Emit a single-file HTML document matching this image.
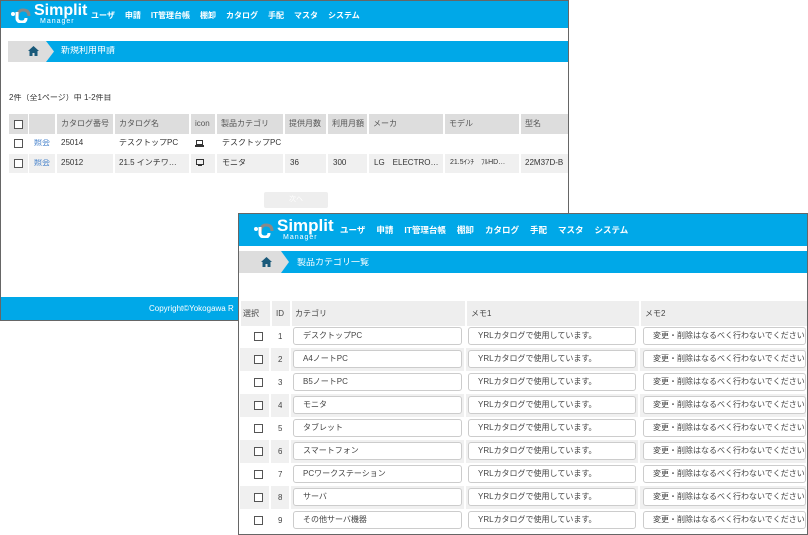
<!DOCTYPE html>
<html><head><meta charset="utf-8"><style>
*{margin:0;padding:0;box-sizing:border-box}
body{width:808px;height:535px;background:#fff;position:relative;overflow:hidden;font-family:"Liberation Sans","Noto Sans CJK JP",sans-serif;color:#333}
.a{position:absolute}
.win{position:absolute;background:#fff;border:1px solid #666;overflow:hidden}
.hdr{position:absolute;left:0;right:0;background:#00a8e8;color:#fff}
.logo{position:absolute;font-weight:bold;color:#fff}
.nav{position:absolute;font-size:8px;font-weight:bold;color:#fff;white-space:nowrap;word-spacing:0}
.nav span{margin-right:10px}
.bc{position:absolute;left:7px;right:0;background:#00a8e8}
.bch{position:absolute;left:0;top:0;bottom:0;background:#ddd}
.cb{position:absolute;width:9px;height:9px;border:1px solid #555;background:#fff}
.cell{position:absolute;font-size:8px;line-height:1;white-space:nowrap;overflow:hidden}
.th{background:#ddd}
.inp{position:absolute;height:18px;border:1px solid #ccc;border-radius:3px;background:#fff;font-size:8px;color:#444;padding-left:9px;line-height:16px;white-space:nowrap;overflow:hidden}
</style></head><body>

<!-- back window -->
<div class="win" style="left:0;top:0;width:569px;height:321px">
  <div class="hdr" style="top:0;height:27px"></div>
  <svg class="a" style="left:9px;top:6px" width="22" height="16" viewBox="0 0 22 16"><circle cx="3" cy="7" r="2" fill="#fff"/><path d="M7 13 Q7 3 13 3 Q19 3 19 9" stroke="#888" stroke-width="3" fill="none"/><path d="M7 5 V11 Q7 15 12 15 Q16 15 16 11" stroke="#fff" stroke-width="3" fill="none"/></svg>
  <div class="logo" style="left:33px;top:1px;font-size:16px">Simplit</div>
  <div class="logo" style="left:39px;top:17px;font-size:7px;letter-spacing:1px;font-weight:normal">Manager</div>
  <div class="nav" style="left:90px;top:9px"><span>ユーザ</span><span>申請</span><span>IT管理台帳</span><span>棚卸</span><span>カタログ</span><span>手配</span><span>マスタ</span><span>システム</span></div>
  <div class="bc" style="top:40px;height:21px"></div>
  <div class="bch" style="left:7px;top:40px;height:21px;width:38px"></div>
  <svg class="a" style="left:45px;top:40px" width="8" height="21"><polygon points="0,0 8,10.5 0,21" fill="#ddd"/></svg>
  <svg class="a" style="left:27px;top:45px" width="11" height="10" viewBox="0 0 11 10"><path d="M5.5 0 L11 5 H9.5 V10 H6.5 V7 H4.5 V10 H1.5 V5 H0 Z" fill="#1a5a7a"/></svg>
  <div class="cell" style="left:60px;top:45px;color:#fff;font-size:9px">新規利用申請</div>
  <div class="cell" style="left:8px;top:93px;color:#333">2件（全1ページ）中 1-2件目</div>
  <div class="cell th" style="left:8px;top:113px;width:19px;height:20px"></div>
  <div class="cb" style="left:13px;top:119px"></div>
  <div class="cell th" style="left:28px;top:113px;width:26px;height:20px"></div>
  <div class="cell th" style="left:56px;top:113px;width:56px;height:20px;padding:6px 4px;color:#555">カタログ番号</div>
  <div class="cell th" style="left:114px;top:113px;width:74px;height:20px;padding:6px 4px;color:#555">カタログ名</div>
  <div class="cell th" style="left:190px;top:113px;width:24px;height:20px;padding:6px 4px;color:#555">icon</div>
  <div class="cell th" style="left:216px;top:113px;width:66px;height:20px;padding:6px 4px;color:#555">製品カテゴリ</div>
  <div class="cell th" style="left:284px;top:113px;width:41px;height:20px;padding:6px 4px;color:#555">提供月数</div>
  <div class="cell th" style="left:327px;top:113px;width:39px;height:20px;padding:6px 4px;color:#555">利用月額</div>
  <div class="cell th" style="left:368px;top:113px;width:74px;height:20px;padding:6px 4px;color:#555">メーカ</div>
  <div class="cell th" style="left:444px;top:113px;width:74px;height:20px;padding:6px 4px;color:#555">モデル</div>
  <div class="cell th" style="left:520px;top:113px;width:48px;height:20px;padding:6px 4px;color:#555">型名</div>
  <div class="cb" style="left:13px;top:138px"></div>
  <div class="cell" style="left:33px;top:138px;color:#3a7ac8">照会</div>
  <div class="cell" style="left:60px;top:138px">25014</div>
  <div class="cell" style="left:118px;top:138px">デスクトップPC</div>
  <div class="a" style="left:195px;top:139px;width:7px;height:5px;border:1px solid #333"></div><div class="a" style="left:194px;top:144px;width:9px;height:2px;background:#333"></div>
  <div class="cell" style="left:221px;top:138px">デスクトップPC</div>
  <div class="a" style="left:8px;top:153px;width:560px;height:19px;background:#f0f0f0"></div>
  <div class="a" style="left:27px;top:153px;width:1px;height:19px;background:#fff"></div>
  <div class="a" style="left:54px;top:153px;width:2px;height:19px;background:#fff"></div>
  <div class="a" style="left:112px;top:153px;width:2px;height:19px;background:#fff"></div>
  <div class="a" style="left:188px;top:153px;width:2px;height:19px;background:#fff"></div>
  <div class="a" style="left:214px;top:153px;width:2px;height:19px;background:#fff"></div>
  <div class="a" style="left:282px;top:153px;width:2px;height:19px;background:#fff"></div>
  <div class="a" style="left:325px;top:153px;width:2px;height:19px;background:#fff"></div>
  <div class="a" style="left:366px;top:153px;width:2px;height:19px;background:#fff"></div>
  <div class="a" style="left:442px;top:153px;width:2px;height:19px;background:#fff"></div>
  <div class="a" style="left:518px;top:153px;width:2px;height:19px;background:#fff"></div>
  <div class="cb" style="left:13px;top:158px"></div>
  <div class="cell" style="left:33px;top:158px;color:#3a7ac8">照会</div>
  <div class="cell" style="left:60px;top:158px">25012</div>
  <div class="cell" style="left:118px;top:158px">21.5 インチワ…</div>
  <div class="a" style="left:195px;top:158px;width:8px;height:6px;border:1px solid #333"></div><div class="a" style="left:197px;top:164px;width:4px;height:1px;background:#333"></div>
  <div class="cell" style="left:221px;top:158px">モニタ</div>
  <div class="cell" style="left:289px;top:158px">36</div>
  <div class="cell" style="left:332px;top:158px">300</div>
  <div class="cell" style="left:373px;top:158px">LG　ELECTRO…</div>
  <div class="cell" style="left:449px;top:158px;font-size:7px">21.5ｲﾝﾁ　ﾌﾙHD…</div>
  <div class="cell" style="left:524px;top:158px">22M37D-B</div>
  <div class="a" style="left:263px;top:191px;width:64px;height:16px;background:#eee;border-radius:2px;color:#fff;font-size:7px;text-align:center;line-height:16px">次へ</div>
  <div class="hdr" style="top:296px;height:24px"></div>
  <div class="cell" style="left:148px;top:304px;color:#fff">Copyright©Yokogawa R</div>
</div>

<!-- front window -->
<div class="win" style="left:238px;top:213px;width:570px;height:322px">
  <div class="hdr" style="top:0;height:32px"></div>
  <svg class="a" style="left:14px;top:8px" width="22" height="16" viewBox="0 0 22 16"><circle cx="3" cy="7" r="2" fill="#fff"/><path d="M7 13 Q7 3 13 3 Q19 3 19 9" stroke="#888" stroke-width="3" fill="none"/><path d="M7 5 V11 Q7 15 12 15 Q16 15 16 11" stroke="#fff" stroke-width="3" fill="none"/></svg>
  <div class="logo" style="left:38px;top:2px;font-size:17px">Simplit</div>
  <div class="logo" style="left:44px;top:20px;font-size:7px;letter-spacing:1px;font-weight:normal">Manager</div>
  <div class="nav" style="left:101px;top:10px;font-size:8.5px"><span style="margin-right:11px">ユーザ</span><span style="margin-right:11px">申請</span><span style="margin-right:11px">IT管理台帳</span><span style="margin-right:11px">棚卸</span><span style="margin-right:11px">カタログ</span><span style="margin-right:11px">手配</span><span style="margin-right:11px">マスタ</span><span>システム</span></div>
  <div class="bc" style="left:0;top:37px;height:22px"></div>
  <div class="bch" style="left:0;top:37px;height:22px;width:42px"></div>
  <svg class="a" style="left:42px;top:37px" width="8" height="22"><polygon points="0,0 8,11 0,22" fill="#ddd"/></svg>
  <svg class="a" style="left:22px;top:43px" width="11" height="10" viewBox="0 0 11 10"><path d="M5.5 0 L11 5 H9.5 V10 H6.5 V7 H4.5 V10 H1.5 V5 H0 Z" fill="#1a5a7a"/></svg>
  <div class="cell" style="left:58px;top:44px;color:#fff;font-size:9px">製品カテゴリ一覧</div>
  <div class="cell th" style="left:2px;top:87px;width:29px;height:25px;background:#eee;padding:9px 2px;color:#444">選択</div>
  <div class="cell th" style="left:33px;top:87px;width:18px;height:25px;background:#eee;padding:9px 4px;color:#444">ID</div>
  <div class="cell th" style="left:53px;top:87px;width:173px;height:25px;background:#eee;padding:9px 3px;color:#444">カテゴリ</div>
  <div class="cell th" style="left:228px;top:87px;width:172px;height:25px;background:#eee;padding:9px 4px;color:#444">メモ1</div>
  <div class="cell th" style="left:402px;top:87px;width:170px;height:25px;background:#eee;padding:9px 4px;color:#444">メモ2</div>
</div>
<div id="rows"></div>
<script>
var names=["デスクトップPC","A4ノートPC","B5ノートPC","モニタ","タブレット","スマートフォン","PCワークステーション","サーバ","その他サーバ機器"];
var h="";
for(var i=0;i<9;i++){var y=325+i*23;
if(i%2==1){h+='<div class="a" style="left:240px;top:'+y+'px;width:566px;height:23px;background:#f0f0f0"></div>';
[269,289,464,638].forEach(function(x){h+='<div class="a" style="left:'+x+'px;top:'+y+'px;width:2px;height:23px;background:#fff"></div>';});}
h+='<div class="cb" style="left:254px;top:'+(y+7)+'px"></div>';
h+='<div class="cell" style="left:278px;top:'+(y+8)+'px;color:#444">'+(i+1)+'</div>';
h+='<div class="inp" style="left:293px;top:'+(y+2)+'px;width:169px">'+names[i]+'</div>';
h+='<div class="inp" style="left:468px;top:'+(y+2)+'px;width:168px">YRLカタログで使用しています。</div>';
h+='<div class="inp" style="left:643px;top:'+(y+2)+'px;width:163px">変更・削除はなるべく行わないでください</div>';}
document.getElementById("rows").innerHTML=h;
</script>
</body></html>
